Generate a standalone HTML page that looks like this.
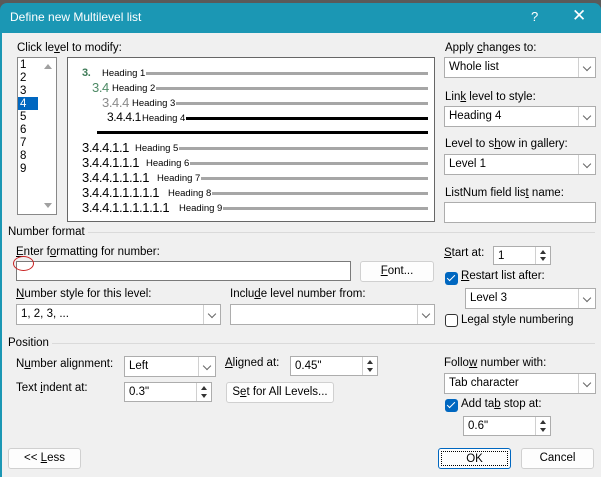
<!DOCTYPE html>
<html><head><meta charset="utf-8"><style>
*{box-sizing:border-box;margin:0;padding:0}
body{width:601px;height:477px;background:#5a5a5a;font-family:"Liberation Sans",sans-serif;font-size:11.5px;color:#000;position:relative;overflow:hidden}
.win{position:absolute;left:0;top:3px;width:601px;height:474px;background:#1b97b4;border-radius:7px 7px 0 0}
.body{position:absolute;left:2px;top:33px;width:599px;height:444px;background:#f0f0f0}
.a{position:absolute;white-space:nowrap}
.t{position:absolute;white-space:nowrap;line-height:14px}
.box{position:absolute;background:#fff;border:1px solid #7a7a7a}
.sel{position:absolute;background:#fff;border:1px solid #adadad}
.sel .dd{position:absolute;right:0;top:0;bottom:0;width:17px;border-left:1px solid #d0d0d0}
.sel .dd:after{content:"";position:absolute;left:5px;top:6px;width:5px;height:5px;border-right:1px solid #666;border-bottom:1px solid #666;transform:rotate(45deg)}
.sel span{position:absolute;left:4px;top:3px}
.spin{position:absolute;background:#fff;border:1px solid #adadad}
.spin span{position:absolute;left:4px;top:3px}
.spin .sb{position:absolute;right:0;top:0;bottom:0;width:15px;border-left:1px solid #d0d0d0}
.sb:before{content:"";position:absolute;left:4px;top:3px;border:3px solid transparent;border-bottom:4px solid #333;border-top:0}
.sb:after{content:"";position:absolute;left:4px;bottom:3px;border:3px solid transparent;border-top:4px solid #333;border-bottom:0}
.btn{position:absolute;background:#fdfdfd;border:1px solid #d0d0d0;border-radius:3px;text-align:center;line-height:18px}
.cb{position:absolute;width:13px;height:13px;border-radius:3px;background:#0067c0}
.cb:after{content:"";position:absolute;left:4px;top:1px;width:3px;height:7px;border-right:1.5px solid #fff;border-bottom:1.5px solid #fff;transform:rotate(45deg)}
.cbo{position:absolute;width:13px;height:13px;border-radius:3px;border:1px solid #333;background:#fff}
.hr{position:absolute;height:1px;background:#dadada}
u{text-decoration:underline}
.pv .n{position:absolute;white-space:nowrap;font-size:13px;line-height:13px;letter-spacing:-0.4px}
.pv .h{position:absolute;white-space:nowrap;font-size:9.5px;line-height:10px}
.pv .l{position:absolute;height:3px;background:#a6a6a6}
</style></head><body>
<div class="win"></div>
<div class="a" style="left:10px;top:10px;color:#fff;font-size:12px">Define new Multilevel list</div>
<div class="a" style="left:531px;top:9px;color:#fff;font-size:13px">?</div>
<div class="a" style="left:572px;top:6px;color:#fff;font-size:17px">✕</div>
<div class="body"></div>

<div class="t" style="left:17px;top:41px">Click le<u>v</u>el to modify:</div>
<div class="box" style="left:17px;top:57px;width:40px;height:158px;border-color:#888"></div>
<div style="position:absolute;left:18px;top:97px;width:20px;height:13px;background:#0067c0"></div>
<div class="a" style="left:20px;top:59px;line-height:13px;font-size:11.5px">1<br>2<br>3<br><span style="color:#fff">4</span><br>5<br>6<br>7<br>8<br>9</div>
<div class="a" style="left:44px;top:64px;border:4px solid transparent;border-bottom:5px solid #a0a0a0;border-top:0"></div>
<div class="a" style="left:44px;top:203px;border:4px solid transparent;border-top:5px solid #a0a0a0;border-bottom:0"></div>

<div class="box pv" style="left:67px;top:57px;width:368px;height:165px;border-color:#666">
 <div class="n" style="left:14px;top:9px;color:#3d7a56;font-weight:bold;font-size:11px">3.</div><div class="h" style="left:34px;top:11px">Heading 1</div><div class="l" style="left:78px;top:14px;width:282px"></div>
 <div class="n" style="left:24px;top:23px;color:#4e8a66">3.4</div><div class="h" style="left:44px;top:26px">Heading 2</div><div class="l" style="left:88px;top:29px;width:272px"></div>
 <div class="n" style="left:34px;top:38px;color:#8a8a8a">3.4.4</div><div class="h" style="left:64px;top:41px">Heading 3</div><div class="l" style="left:108px;top:44px;width:252px"></div>
 <div class="n" style="left:39px;top:53px;font-size:12px">3.4.4.1</div><div class="h" style="left:74px;top:56px">Heading 4</div><div class="l" style="left:118px;top:59px;width:242px;background:#000"></div>
 <div class="l" style="left:29px;top:73px;width:331px;background:#000"></div>
 <div class="n" style="left:14px;top:83px">3.4.4.1.1</div><div class="h" style="left:67px;top:86px">Heading 5</div><div class="l" style="left:111px;top:89px;width:249px"></div>
 <div class="n" style="left:14px;top:98px">3.4.4.1.1.1</div><div class="h" style="left:78px;top:101px">Heading 6</div><div class="l" style="left:122px;top:104px;width:238px"></div>
 <div class="n" style="left:14px;top:113px">3.4.4.1.1.1.1</div><div class="h" style="left:89px;top:116px">Heading 7</div><div class="l" style="left:133px;top:119px;width:227px"></div>
 <div class="n" style="left:14px;top:128px">3.4.4.1.1.1.1.1</div><div class="h" style="left:100px;top:131px">Heading 8</div><div class="l" style="left:144px;top:134px;width:216px"></div>
 <div class="n" style="left:14px;top:143px">3.4.4.1.1.1.1.1.1</div><div class="h" style="left:111px;top:146px">Heading 9</div><div class="l" style="left:155px;top:149px;width:205px"></div>
</div>

<div class="t" style="left:445px;top:41px">Apply <u>c</u>hanges to:</div>
<div class="sel" style="left:444px;top:57px;width:152px;height:21px"><span>Whole list</span><div class="dd"></div></div>
<div class="t" style="left:445px;top:90px">Lin<u>k</u> level to style:</div>
<div class="sel" style="left:444px;top:106px;width:152px;height:21px"><span>Heading 4</span><div class="dd"></div></div>
<div class="t" style="left:445px;top:137px">Level to s<u>h</u>ow in gallery:</div>
<div class="sel" style="left:444px;top:154px;width:152px;height:21px"><span>Level 1</span><div class="dd"></div></div>
<div class="t" style="left:445px;top:186px">ListNum field lis<u>t</u> name:</div>
<div class="sel" style="left:444px;top:202px;width:152px;height:21px"></div>

<div class="t" style="left:8px;top:225px">Number format</div>
<div class="hr" style="left:88px;top:232px;width:507px"></div>
<div class="t" style="left:16px;top:245px"><u>E</u>nter f<u>o</u>rmatting for number:</div>
<div class="box" style="left:16px;top:261px;width:335px;height:20px;border-color:#7a7a7a"></div>
<div class="a" style="left:13px;top:256px;width:21px;height:15px;border:1.5px solid #c82020;border-radius:50%"></div>
<div class="btn" style="left:360px;top:261px;width:74px;height:21px"><u>F</u>ont...</div>
<div class="t" style="left:444px;top:246px"><u>S</u>tart at:</div>
<div class="spin" style="left:493px;top:246px;width:58px;height:19px"><span>1</span><div class="sb"></div></div>
<div class="cb" style="left:445px;top:272px"></div>
<div class="t" style="left:461px;top:269px"><u>R</u>estart list after:</div>
<div class="sel" style="left:465px;top:288px;width:131px;height:21px"><span>Level 3</span><div class="dd"></div></div>
<div class="cbo" style="left:445px;top:314px"></div>
<div class="t" style="left:461px;top:313px">Le<u>g</u>al style numbering</div>
<div class="t" style="left:16px;top:287px"><u>N</u>umber style for this level:</div>
<div class="sel" style="left:16px;top:304px;width:205px;height:21px"><span>1, 2, 3, ...</span><div class="dd"></div></div>
<div class="t" style="left:230px;top:287px">Inclu<u>d</u>e level number from:</div>
<div class="sel" style="left:230px;top:304px;width:205px;height:21px"><div class="dd"></div></div>

<div class="t" style="left:8px;top:336px">Position</div>
<div class="hr" style="left:52px;top:343px;width:543px"></div>
<div class="t" style="left:16px;top:357px">N<u>u</u>mber alignment:</div>
<div class="sel" style="left:124px;top:356px;width:92px;height:21px"><span>Left</span><div class="dd"></div></div>
<div class="t" style="left:225px;top:356px"><u>A</u>ligned at:</div>
<div class="spin" style="left:290px;top:356px;width:88px;height:20px"><span>0.45"</span><div class="sb"></div></div>
<div class="t" style="left:16px;top:381px">Text <u>i</u>ndent at:</div>
<div class="spin" style="left:124px;top:382px;width:88px;height:20px"><span>0.3"</span><div class="sb"></div></div>
<div class="btn" style="left:226px;top:382px;width:108px;height:21px">S<u>e</u>t for All Levels...</div>
<div class="t" style="left:444px;top:356px">Follo<u>w</u> number with:</div>
<div class="sel" style="left:444px;top:373px;width:152px;height:21px"><span>Tab character</span><div class="dd"></div></div>
<div class="cb" style="left:445px;top:399px"></div>
<div class="t" style="left:461px;top:397px">Add ta<u>b</u> stop at:</div>
<div class="spin" style="left:463px;top:416px;width:88px;height:20px"><span>0.6"</span><div class="sb"></div></div>

<div class="btn" style="left:8px;top:448px;width:73px;height:21px">&lt;&lt; <u>L</u>ess</div>
<div class="btn" style="left:438px;top:448px;width:73px;height:21px;border:1px solid #0067c0"><div style="position:absolute;inset:2px;border:1px dotted #000;line-height:14px">OK</div></div>
<div class="btn" style="left:521px;top:448px;width:73px;height:21px">Cancel</div>
</body></html>
